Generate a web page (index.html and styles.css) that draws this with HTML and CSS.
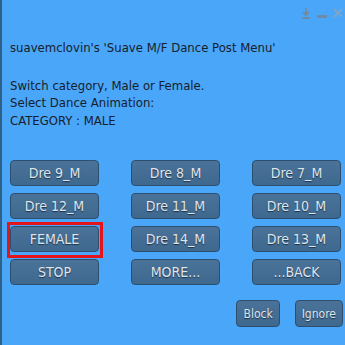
FILE: index.html
```html
<!DOCTYPE html>
<html>
<head>
<meta charset="utf-8">
<link rel="stylesheet" href="styles.css">
</head>
<body>
<div class="dialog">
  <div class="titlebar">
    <svg class="icon" width="10" height="12" viewBox="0 0 10 12"><path d="M5 0v7M2 4l3 3 3-3" fill="none" stroke="#6f8ca6" stroke-width="2"/><rect x="1" y="9" width="8" height="2" fill="#6f8ca6"/></svg>
    <svg class="icon" width="10" height="12" viewBox="0 0 10 12"><rect x="0" y="7" width="10" height="3" fill="#6f8ca6"/></svg>
    <svg class="icon" width="10" height="12" viewBox="0 0 10 12"><path d="M1 1l8 8M9 1l-8 8" stroke="#8aa4ba" stroke-width="1.6"/></svg>
  </div>
  <div class="message">
    <p class="owner">suavemclovin's 'Suave M/F Dance Post Menu'</p>
    <p class="body">Switch category, Male or Female.<br>Select Dance Animation:<br>CATEGORY : MALE</p>
  </div>
  <div class="grid">
    <div class="btn">Dre 9_M</div>
    <div class="btn">Dre 8_M</div>
    <div class="btn">Dre 7_M</div>
    <div class="btn">Dre 12_M</div>
    <div class="btn">Dre 11_M</div>
    <div class="btn">Dre 10_M</div>
    <div class="btn selected">FEMALE</div>
    <div class="btn">Dre 14_M</div>
    <div class="btn">Dre 13_M</div>
    <div class="btn">STOP</div>
    <div class="btn">MORE...</div>
    <div class="btn">...BACK</div>
  </div>
  <div class="footer">
    <div class="btn small">Block</div>
    <div class="btn small">Ignore</div>
  </div>
</div>
</body>
</html>
```
FILE: styles.css
```css
html, body {
  margin: 0;
  padding: 0;
  background: #4aa6f8;
}
.dialog {
  width: 343px;
  height: 345px;
  border-left: 2px solid #2f6088;
  font-family: "DejaVu Sans Condensed", "DejaVu Sans", sans-serif;
  font-stretch: condensed;
  color: #17202b;
}
.titlebar {
  display: flex;
  justify-content: flex-end;
  gap: 6px;
  padding: 8px 2px 0 0;
  height: 20px;
  box-sizing: border-box;
}
.icon { display: block; }
.message {
  padding-left: 8px;
  font-size: 13px;
  line-height: 17.5px;
}
.message p { margin: 0; }
.owner { margin-top: 19px !important; }
.body { margin-top: 20px !important; }
.grid {
  display: grid;
  grid-template-columns: 89px 89px 89px;
  column-gap: 32px;
  row-gap: 7px;
  margin: 31px 0 0 8px;
}
.btn {
  height: 26px;
  box-sizing: border-box;
  border: 1px solid #2c4f6f;
  border-radius: 4px;
  background: linear-gradient(#4b7399, #3f688f);
  color: #dfe5ec;
  text-shadow: 0 1px 1px #1c3146;
  font-size: 14px;
  display: flex;
  align-items: center;
  justify-content: center;
  position: relative;
}
.selected::after {
  content: "";
  position: absolute;
  left: -4px;
  top: -5px;
  right: -5px;
  bottom: -7px;
  border: 3px solid #e5141c;
}
.footer {
  display: flex;
  justify-content: flex-end;
  gap: 15px;
  padding: 15px 2px 0 0;
}
.small {
  height: 27px;
  padding: 0 6px;
  font-size: 12px;
}
```
